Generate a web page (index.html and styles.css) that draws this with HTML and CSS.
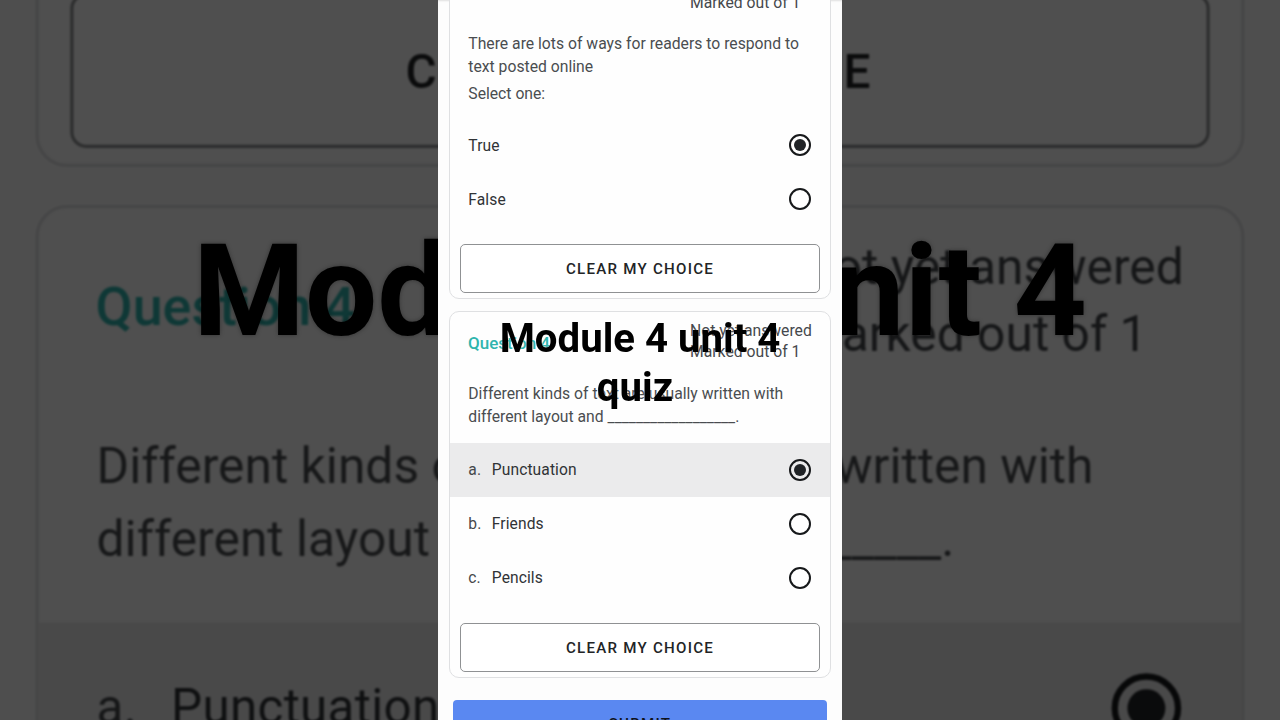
FILE: index.html
```html
<!DOCTYPE html>
<html lang="en">
<head>
<meta charset="utf-8">
<title>Module 4 unit 4 quiz</title>
<link rel="stylesheet" href="styles.css">
</head>
<body>
<main class="stage">
  <div class="backdrop" aria-hidden="true">
    <div class="sheet">
      <section class="card card-first">
        <header class="card-head"><span class="q-label">Question 3</span><span class="q-state">Not yet answered<br>Marked out of 1</span></header>
        <p class="q-text">There are lots of ways for readers to respond to text posted online</p>
        <p class="q-hint">Select one:</p>
        <div class="options">
          <div class="option"><span class="option-label">True</span><span class="radio radio-on"></span></div>
          <div class="option"><span class="option-label">False</span><span class="radio"></span></div>
        </div>
        <div class="clear">CLEAR MY CHOICE</div>
      </section>
      <section class="card">
        <header class="card-head"><span class="q-label">Question 4</span><span class="q-state">Not yet answered<br>Marked out of 1</span></header>
        <p class="q-text q-text-last">Different kinds of text are usually written with different layout and __________________.</p>
        <div class="options">
          <div class="option option-picked"><span class="option-label"><span class="letter">a.</span>Punctuation</span><span class="radio radio-on"></span></div>
          <div class="option"><span class="option-label"><span class="letter">b.</span>Friends</span><span class="radio"></span></div>
          <div class="option"><span class="option-label"><span class="letter">c.</span>Pencils</span><span class="radio"></span></div>
        </div>
        <div class="clear">CLEAR MY CHOICE</div>
      </section>
      <div class="submit">SUBMIT</div>
    </div>
  </div>
  <div class="big-title" aria-hidden="true">Module 4 unit 4</div>

  <div class="phone">
    <div class="sheet">
      <section class="card card-first">
        <header class="card-head"><span class="q-label">Question 3</span><span class="q-state">Not yet answered<br>Marked out of 1</span></header>
        <p class="q-text">There are lots of ways for readers to respond to text posted online</p>
        <p class="q-hint">Select one:</p>
        <div class="options">
          <div class="option"><span class="option-label">True</span><span class="radio radio-on"></span></div>
          <div class="option"><span class="option-label">False</span><span class="radio"></span></div>
        </div>
        <button class="clear">CLEAR MY CHOICE</button>
      </section>
      <section class="card">
        <header class="card-head"><span class="q-label">Question 4</span><span class="q-state">Not yet answered<br>Marked out of 1</span></header>
        <p class="q-text q-text-last">Different kinds of text are usually written with different layout and __________________.</p>
        <div class="options">
          <div class="option option-picked"><span class="option-label"><span class="letter">a.</span>Punctuation</span><span class="radio radio-on"></span></div>
          <div class="option"><span class="option-label"><span class="letter">b.</span>Friends</span><span class="radio"></span></div>
          <div class="option"><span class="option-label"><span class="letter">c.</span>Pencils</span><span class="radio"></span></div>
        </div>
        <button class="clear">CLEAR MY CHOICE</button>
      </section>
      <button class="submit">SUBMIT</button>
    </div>
  </div>
  <h1 class="title">Module 4 unit 4<br><span class="title-second">quiz</span></h1>
</main>
</body>
</html>
```
FILE: styles.css
```css
* { box-sizing: border-box; }
html, body { margin: 0; height: 100%; }
body { overflow: hidden; background: #4e4e4e; font-family: Roboto, "Liberation Sans", sans-serif; }

.stage {
  position: relative;
  width: 1280px;
  height: 720px;
  overflow: hidden;
  display: flex;
  justify-content: center;
}

.backdrop {
  position: absolute;
  left: 438px;
  top: 0;
  width: 404px;
  height: 720px;
  background: #fdfdfd;
  transform: scale(3.165);
  transform-origin: 50% 50%;
  filter: blur(.3px) brightness(.31);
}

.big-title {
  position: absolute;
  left: 0;
  right: 0;
  top: 216px;
  text-align: center;
  font-size: 128px;
  line-height: 150px;
  font-weight: 700;
  color: #000;
  text-shadow: 0 0 4px rgba(0, 0, 0, .35);
  white-space: nowrap;
}

.phone {
  position: relative;
  width: 404px;
  height: 720px;
  overflow: hidden;
  background: #fdfdfd;
  box-shadow: inset 0 2px 2px -1px rgba(0, 0, 0, .12);
}

.sheet {
  display: flex;
  flex-direction: column;
  gap: 12px;
  padding: 0 11px;
  margin-top: -37px;
}

.card {
  background: #fefefe;
  border: 1px solid #dfe0e2;
  border-radius: 10px;
  padding-bottom: 5px;
  overflow: hidden;
}

.card-head {
  display: flex;
  justify-content: space-between;
  align-items: center;
  padding: 8px 18px 0;
  font-size: 15.72px;
  line-height: 21px;
}
.card-first .card-head { padding-top: 6.5px; }

.q-label { color: #2fb5ae; font-weight: 500; font-size: 17px; margin-top: 4px; }
.card-first .q-label { margin-top: -6px; }
.q-state { color: #45484c; width: 122px; white-space: nowrap; }

.q-text, .q-hint {
  margin: 0;
  padding: 0 18.3px;
  color: #4a4d50;
  font-size: 15.72px;
  line-height: 22.4px;
}
.q-text { margin-top: 21px; }
.card-first .q-text { margin-top: 20.9px; }
.q-hint { margin-top: 4.6px; }
.q-text-last { margin-bottom: 15px; }
.card-first .options { margin-top: 13px; }

.option {
  display: flex;
  align-items: center;
  justify-content: space-between;
  height: 54px;
  padding: 0 19px 0 18.3px;
}
.option-picked { background: #ebebec; }
.option-label { color: #303336; font-size: 15.6px; letter-spacing: .1px; }
.card-first .option-label { padding-top: 1px; }
.letter { display: inline-block; width: 23.5px; color: #45484b; font-size: 15.6px; }

.radio {
  width: 22px;
  height: 22px;
  border: 2px solid #17191b;
  border-radius: 50%;
  background: #fff;
  display: flex;
  align-items: center;
  justify-content: center;
}
.radio-on::after {
  content: "";
  width: 12px;
  height: 12px;
  border-radius: 50%;
  background: #202326;
}
.option-picked .radio { background: transparent; }

.clear {
  display: block;
  width: 360.8px;
  height: 49px;
  margin: 18px 0 0 9.6px;
  border: 1px solid #8f9193;
  border-bottom-width: 1.5px;
  border-radius: 5px;
  background: #fff;
  color: #222426;
  font: 500 15.1px/48px Roboto, "Liberation Sans", sans-serif;
  letter-spacing: 1.25px;
  text-align: center;
  padding: 0;
}

.submit {
  display: block;
  width: 374px;
  height: 48px;
  margin: 10px 0 0 4px;
  border: 0;
  border-radius: 4px;
  background: #5a88f1;
  color: #10131c;
  font: 500 15.1px/48px Roboto, "Liberation Sans", sans-serif;
  letter-spacing: 1.25px;
  text-align: center;
  padding: 0;
}

.title {
  position: absolute;
  left: 0;
  right: 0;
  top: 314px;
  margin: 0;
  text-align: center;
  font-size: 40.2px;
  line-height: 49px;
  font-weight: 700;
  color: #000;
  text-shadow: 0 0 2px rgba(255, 255, 255, .5);
}
.title-second { display: inline-block; margin-right: 10px; }
```
